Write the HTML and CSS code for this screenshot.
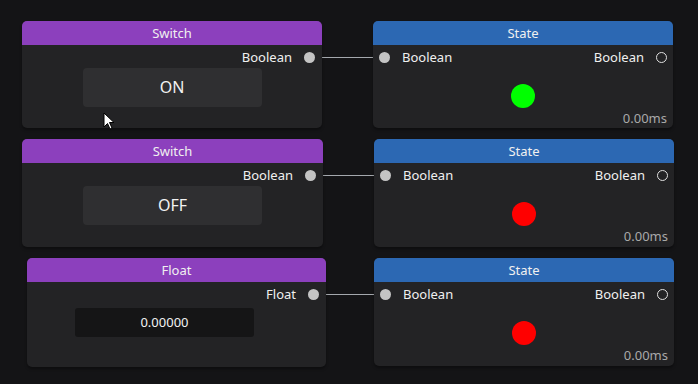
FILE: index.html
```html
<!DOCTYPE html>
<html>
<head>
    <meta name="viewport" content="width=device-width, initial-scale=1.0">
    <link rel="stylesheet" href="styles.css">
</head>
<body>
    <div class="canvas">
        <!-- Connections -->
        <svg class="wires" width="698" height="384">
            <line x1="315" y1="57.5" x2="380" y2="57.5"></line>
            <line x1="316" y1="175.5" x2="380" y2="175.5"></line>
            <line x1="320" y1="294.5" x2="381" y2="294.5"></line>
        </svg>

        <!-- Row 1 -->
        <div class="node" style="left:22px; top:21px; width:300px; height:107px;">
            <div class="node-header purple">Switch</div>
            <div class="node-body">
                <div class="port-row out">
                    <span class="port-label">Boolean</span>
                    <span class="port filled"></span>
                </div>
                <div class="toggle">ON</div>
            </div>
        </div>

        <div class="node" style="left:373px; top:21px; width:300px; height:107px;">
            <div class="node-header blue">State</div>
            <div class="node-body">
                <div class="port-row both">
                    <span class="port filled"></span>
                    <span class="port-label">Boolean</span>
                    <span class="spacer"></span>
                    <span class="port-label">Boolean</span>
                    <span class="port hollow"></span>
                </div>
                <div class="lamp green"></div>
                <div class="timing">0.00ms</div>
            </div>
        </div>

        <!-- Row 2 -->
        <div class="node" style="left:22px; top:139px; width:301px; height:108px;">
            <div class="node-header purple">Switch</div>
            <div class="node-body">
                <div class="port-row out">
                    <span class="port-label">Boolean</span>
                    <span class="port filled"></span>
                </div>
                <div class="toggle">OFF</div>
            </div>
        </div>

        <div class="node" style="left:374px; top:139px; width:300px; height:108px;">
            <div class="node-header blue">State</div>
            <div class="node-body">
                <div class="port-row both">
                    <span class="port filled"></span>
                    <span class="port-label">Boolean</span>
                    <span class="spacer"></span>
                    <span class="port-label">Boolean</span>
                    <span class="port hollow"></span>
                </div>
                <div class="lamp red"></div>
                <div class="timing">0.00ms</div>
            </div>
        </div>

        <!-- Row 3 -->
        <div class="node" style="left:27px; top:258px; width:299px; height:109px;">
            <div class="node-header purple">Float</div>
            <div class="node-body">
                <div class="port-row out">
                    <span class="port-label">Float</span>
                    <span class="port filled"></span>
                </div>
                <div class="number-field">0.00000</div>
            </div>
        </div>

        <div class="node" style="left:374px; top:258px; width:300px; height:108px;">
            <div class="node-header blue">State</div>
            <div class="node-body">
                <div class="port-row both">
                    <span class="port filled"></span>
                    <span class="port-label">Boolean</span>
                    <span class="spacer"></span>
                    <span class="port-label">Boolean</span>
                    <span class="port hollow"></span>
                </div>
                <div class="lamp red"></div>
                <div class="timing">0.00ms</div>
            </div>
        </div>

        <!-- Mouse pointer -->
        <svg class="cursor" width="13" height="19" viewBox="0 0 13 19">
            <path d="M1 1 L1 15 L4.5 11.5 L7 17 L9 16 L6.5 10.5 L11 10.5 Z" fill="#fff" stroke="#000" stroke-width="1"></path>
        </svg>
    </div>
</body>
</html>
```

FILE: styles.css
```css
body {
    margin: 0;
    background-color: #141416;
    color: #e6e6e6;
    font-family: "Noto Sans", "Open Sans", sans-serif;
    font-size: 13px;
}

.canvas {
    position: relative;
    width: 698px;
    height: 384px;
    overflow: hidden;
}

/* Connections */
.wires {
    position: absolute;
    left: 0;
    top: 0;
}

.wires line {
    stroke: #a4a8ad;
    stroke-width: 1;
}

/* Nodes */
.node {
    position: absolute;
    display: flex;
    flex-direction: column;
    background-color: #232325;
    border-radius: 5px;
    box-shadow: 0 2px 3px rgba(0, 0, 0, 0.35);
}

.node-header {
    height: 24px;
    line-height: 24px;
    text-align: center;
    color: #f0f0f0;
    border-radius: 5px 5px 0 0;
}

.purple {
    background-color: #8c40bd;
}

.blue {
    background-color: #2c68b3;
}

.node-body {
    flex: 1;
    display: flex;
    flex-direction: column;
    padding-top: 4px;
}

/* Ports */
.port-row {
    display: flex;
    align-items: center;
    height: 16px;
    padding: 0 7px;
}

.port-row.out {
    justify-content: flex-end;
}

.port-row.both {
    padding: 0 6px;
}

.port-label {
    color: #f0f0f0;
}

.out .port-label {
    margin-right: 12px;
}

.both .port.filled {
    margin-right: 12px;
}

.both .port.hollow {
    margin-left: 12px;
}

.spacer {
    flex: 1;
}

.port {
    width: 11px;
    height: 11px;
    border-radius: 50%;
    box-sizing: border-box;
}

.port.filled {
    background-color: #c4c4c4;
}

.port.hollow {
    border: 1.5px solid #e0e0e0;
}

/* Switch button */
.toggle {
    width: 179px;
    height: 39px;
    line-height: 39px;
    margin: 3px auto 0;
    background-color: #2f2f31;
    border-radius: 4px;
    text-align: center;
    font-size: 16px;
    color: #f2f2f2;
}

/* Float input */
.number-field {
    width: 179px;
    height: 29px;
    line-height: 29px;
    margin: 6px 0 0 48px;
    background-color: #151516;
    border-radius: 3px;
    text-align: center;
    color: #f2f2f2;
}

/* State lamp */
.lamp {
    width: 24px;
    height: 24px;
    border-radius: 50%;
    margin: 19px auto 0;
}

.lamp.green {
    background-color: #00ff00;
}

.lamp.red {
    background-color: #ff0000;
}

.timing {
    text-align: right;
    padding-right: 6px;
    margin-top: 2px;
    line-height: 16px;
    color: #a9a9a9;
}

/* Pointer */
.cursor {
    position: absolute;
    left: 103px;
    top: 112px;
}
```
